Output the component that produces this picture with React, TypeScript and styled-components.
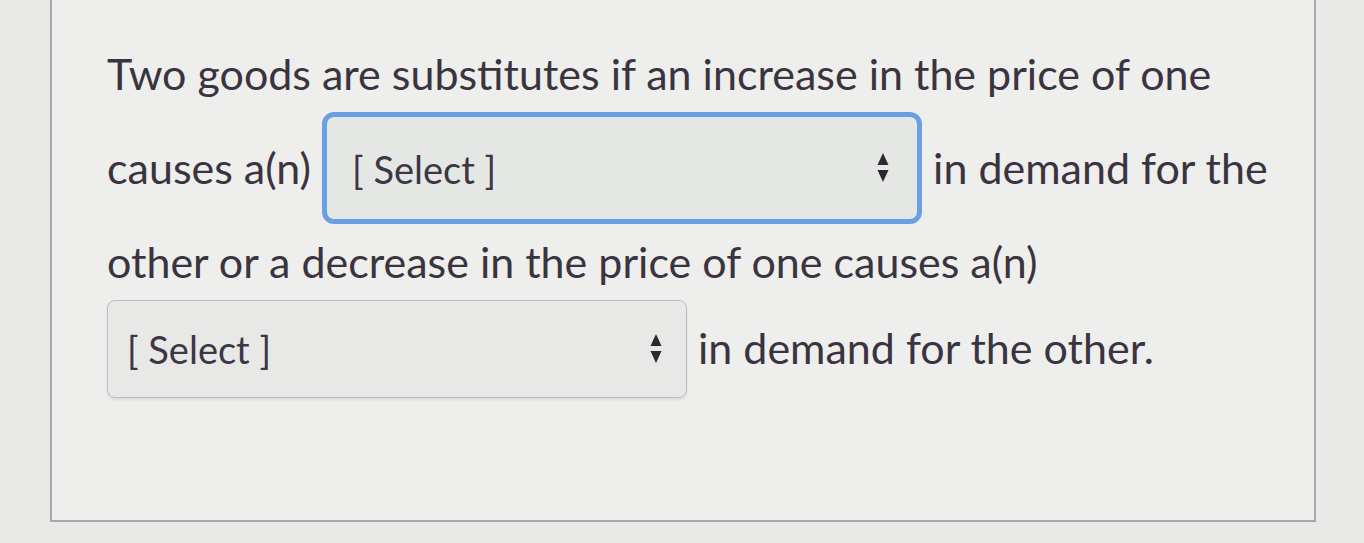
import React from 'react';
import styled, { createGlobalStyle } from 'styled-components';

const GlobalStyle = createGlobalStyle`
  html, body {
    margin: 0;
    padding: 0;
    background: #e9e9e7;
  }

  body {
    font-family: Lato, "Open Sans", sans-serif;
    color: #3a3440;
  }
`;

const Page = styled.div`
  height: 543px;
  padding: 0 48px 0 50px;
  overflow: hidden;
`;

const Panel = styled.section`
  height: 522px;
  box-sizing: border-box;
  padding: 36px 0 0 55px;
  background: #eeeeec;
  border: 2px solid #a9a7ad;
  border-top: none;
`;

const Question = styled.p`
  margin: 0;
  width: 1190px;
  font-size: 43px;
  line-height: 76px;
  color: #3a3440;
`;

const Select = styled.span<{ $focused?: boolean; $width: number; $height: number }>`
  display: inline-flex;
  box-sizing: border-box;
  width: ${props => props.$width}px;
  height: ${props => props.$height}px;
  padding: ${props => props.$focused ? '0 28px 0 25px' : '0 24px 0 19px'};
  border: ${props => props.$focused ? '5px solid #6b9fe4' : '1px solid #bebdc2'};
  border-radius: ${props => props.$focused ? '12px' : '8px'};
  background: ${props => props.$focused ? '#e5e7e4' : '#e8e9e7'};
  box-shadow: ${props => props.$focused ? 'none' : '0 2px 3px rgba(0, 0, 0, 0.08)'};
  cursor: pointer;
`;

const SelectLabel = styled.span<{ $top: number }>`
  flex: 1;
  align-self: flex-start;
  padding-top: ${props => props.$top}px;
  font-size: 38px;
  line-height: 1.2;
  color: #3d3644;
`;

const Arrows = styled.svg`
  align-self: center;
  flex: none;
`;

const SortArrows = () => (
  <Arrows width="12" height="32" viewBox="0 0 12 32">
    <path d="M6 1 L11.5 13 L0.5 13 Z" fill="#2b2832" />
    <path d="M0.5 18 L11.5 18 L6 30 Z" fill="#2b2832" />
  </Arrows>
);

interface DropdownProps {
  focused?: boolean;
  width: number;
  height: number;
  top: number;
}

const Dropdown = ({ focused, width, height, top }: DropdownProps) => (
  <Select role="combobox" $focused={focused} $width={width} $height={height}>
    <SelectLabel $top={top}>[ Select ]</SelectLabel>
    <SortArrows />
  </Select>
);

export default function App() {
  return (
    <>
      <GlobalStyle />
      <Page>
        <Panel>
          <Question>
            Two goods are substitutes if an increase in the price of one causes a(n){' '}
            <Dropdown focused width={600} height={112} top={30} />{' '}
            in demand for the other or a decrease in the price of one causes a(n){' '}
            <Dropdown width={580} height={98} top={26} />{' '}
            in demand for the other.
          </Question>
        </Panel>
      </Page>
    </>
  );
}
